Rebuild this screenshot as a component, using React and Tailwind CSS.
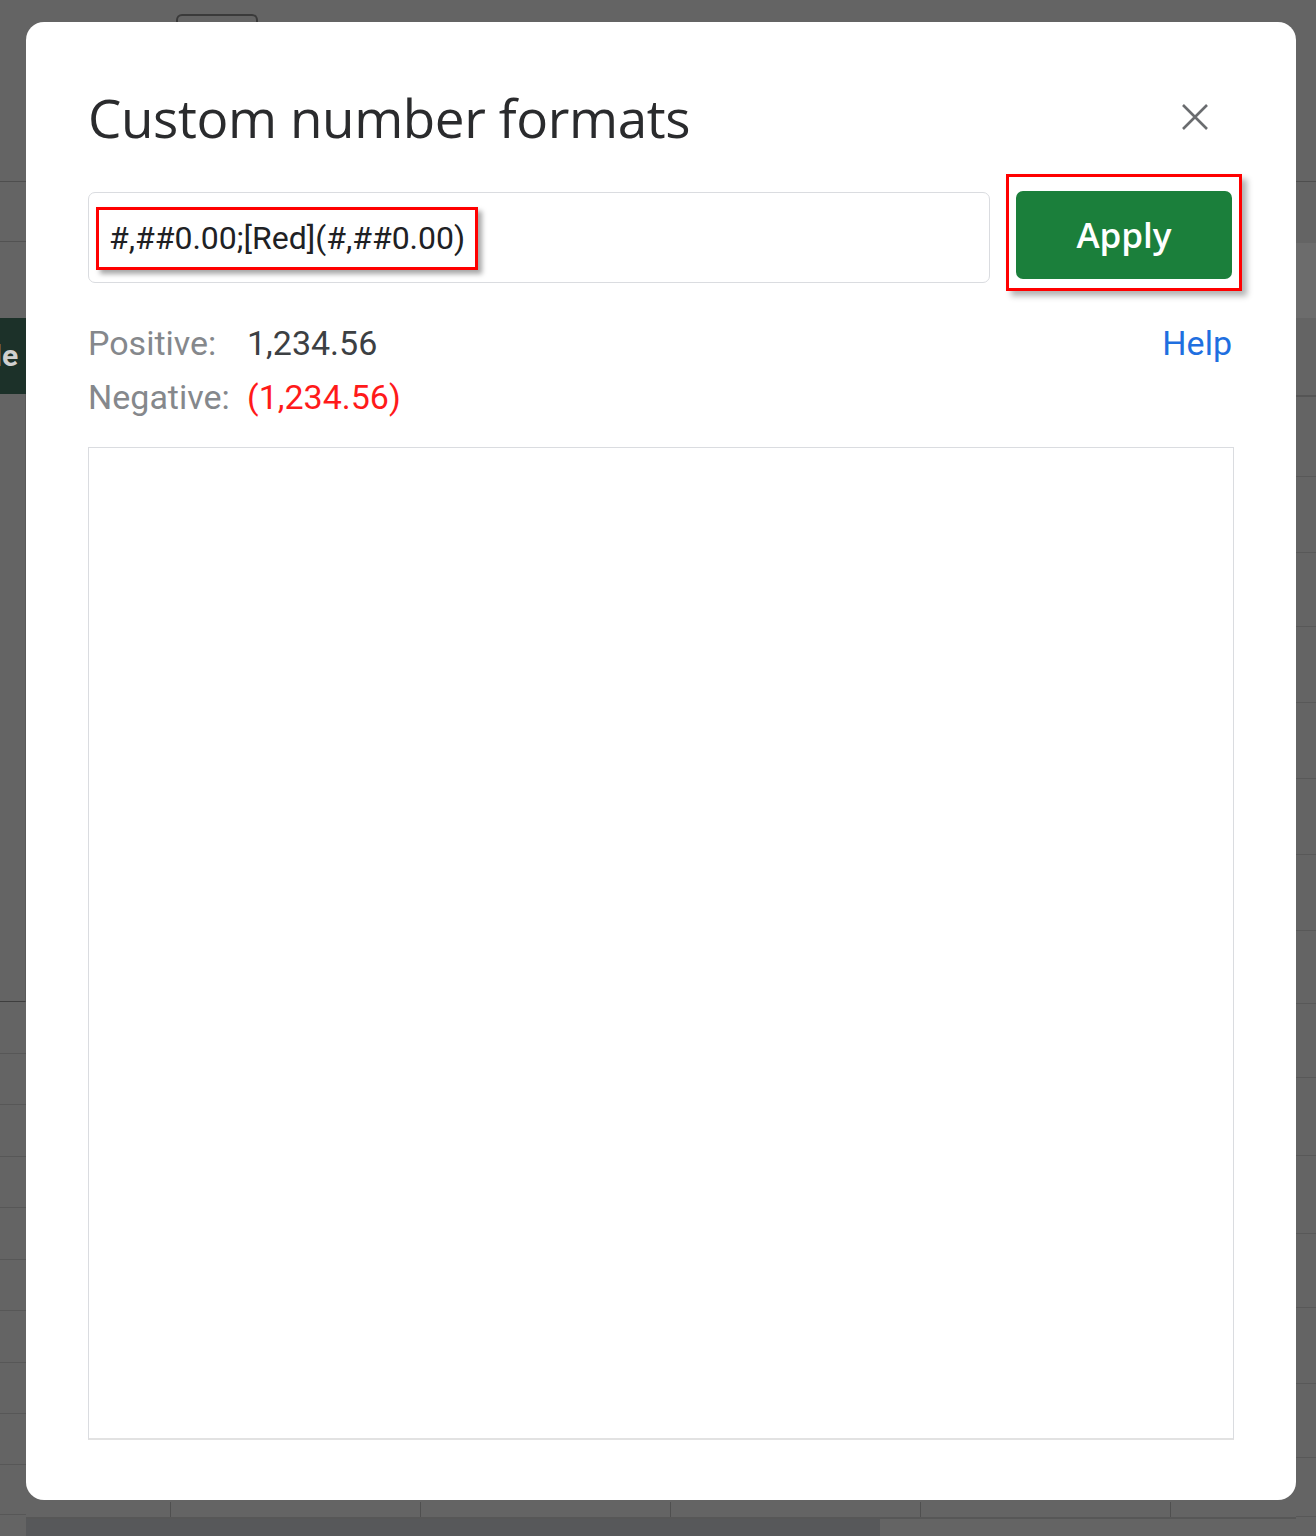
import React from "react";

const LeftStrip = () => (
  <div className="flex flex-col w-[26px] shrink-0">
    <div className="h-[182px] border-b border-[#4e4e4e]" />
    <div className="h-[60px] border-b border-[#525252]" />
    <div className="h-[76px]" />
    <div className="h-[76px] bg-[#1c3129] overflow-hidden flex items-center">
      <span className="text-[30px] font-bold text-[#d0d0d0] -ml-[6px] leading-none" style={{ fontFamily: "Roboto, sans-serif" }}>le</span>
    </div>
    <div className="h-[608px] border-b border-[#3e3e3e] border-r border-r-[#5a5a5a]" />
    {[52, 51, 52, 51, 52, 51, 52, 51, 51, 50].map((h, i) => (
      <div key={i} style={{ height: h }} className="border-b border-[#575757]" />
    ))}
  </div>
);

const RightStrip = () => (
  <div className="flex flex-col w-[20px] shrink-0">
    <div className="h-[182px] border-b border-[#4e4e4e]" />
    <div className="h-[61px]" />
    <div className="h-[75px] bg-[#6c6c6c]" />
    <div className="h-[79px] border-b-2 border-[#555555]" />
    {[80, 76, 74, 76, 76, 76, 76, 73, 74, 78, 78, 74, 76, 74, 59].map((h, i) => (
      <div key={i} style={{ height: h }} className="border-b border-[#585858]" />
    ))}
  </div>
);

export default function App() {
  return (
    <div className="relative w-[1316px] h-[1536px] bg-[#646464] overflow-hidden">
      {/* dimmed spreadsheet backdrop */}
      <div className="flex w-full h-full">
        <LeftStrip />
        <div className="flex-1 flex flex-col">
          <div className="h-[14px]" />
          <div className="flex">
            <div className="w-[150px]" />
            <div className="w-[82px] h-[10px] border-t-2 border-x-2 border-[#3a3a3a] rounded-t-[6px]" />
          </div>
          <div className="flex-1" />
          <div className="h-[17px] border-b-2 border-[#575757] flex">
            {[145, 250, 250, 250, 250].map((w, i) => (
              <div key={i} style={{ width: w }} className="border-r border-[#4f4f4f] h-full" />
            ))}
          </div>
          <div className="h-[17px] flex">
            <div className="w-[854px] bg-[#57585a]" />
          </div>
        </div>
        <RightStrip />
      </div>

      {/* dialog */}
      <div
        className="absolute left-[26px] top-[22px] w-[1270px] h-[1478px] bg-white rounded-[18px] pl-[62px] pr-[62px] flex flex-col"
        style={{ fontFamily: "Roboto, 'Liberation Sans', sans-serif" }}
      >
        <div className="flex items-center justify-between mt-[62px] h-[66px]">
          <h1
            className="text-[53px] leading-none text-[#2a2b2d] tracking-[-0.4px]"
            style={{ fontFamily: "'Open Sans', sans-serif" }}
          >
            Custom number formats
          </h1>
          <svg width="28" height="28" viewBox="0 0 28 28" className="mr-[25px]">
            <path d="M2 2 L26 26 M26 2 L2 26" stroke="#6a6c6f" strokeWidth="2.6" />
          </svg>
        </div>

        <div className="flex items-start mt-[42px] gap-[16px]">
          <div className="shrink-0 w-[902px] h-[91px] border border-[#dadce0] rounded-[7px] flex items-center">
            <div className="ml-[7px] mt-[1px] h-[63px] px-[10px] border-[3px] border-[#ff0000] flex items-center shadow-[4px_4px_5px_rgba(0,0,0,0.35)]">
              <span className="text-[32px] text-[#202124] leading-none">#,##0.00;[Red](#,##0.00)</span>
            </div>
          </div>
          <div className="shrink-0 -mt-[18px] -mr-[8px] w-[236px] h-[117px] border-[3px] border-[#ff0000] shadow-[5px_5px_6px_rgba(0,0,0,0.3)] flex items-start pt-[14px] pl-[7px]">
            <button className="w-[216px] h-[88px] bg-[#1b7f3b] rounded-[7px] text-white text-[35px] font-semibold" style={{ fontFamily: "'Open Sans', sans-serif" }}>
              Apply
            </button>
          </div>
        </div>

        <div className="flex justify-between mt-[34px]">
          <div className="flex flex-col gap-[18px]">
            <div className="flex text-[34px] leading-[36px]">
              <span className="w-[159px] text-[#85888c]">Positive:</span>
              <span className="text-[#3c4043]">1,234.56</span>
            </div>
            <div className="flex text-[34px] leading-[36px]">
              <span className="w-[159px] text-[#85888c]">Negative:</span>
              <span className="text-[#ff1a1a]">(1,234.56)</span>
            </div>
          </div>
          <a className="text-[34px] leading-[36px] text-[#1f6fe0] mr-[2px]">Help</a>
        </div>

        <div className="mt-[32px] w-[1146px] h-[993px] border border-[#dadce0] border-b-2 border-b-[#e2e2e2]" />
      </div>
    </div>
  );
}
